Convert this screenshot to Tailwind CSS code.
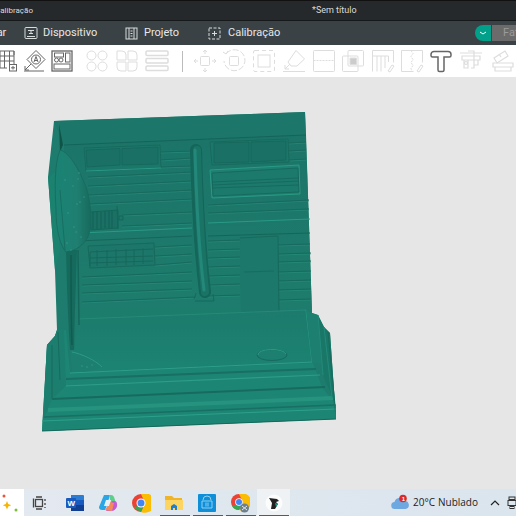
<!DOCTYPE html>
<html lang="pt">
<head>
<meta charset="UTF-8">
<title>Sem titulo</title>
<script src="https://cdn.jsdelivr.net/npm/@tailwindcss/browser@4"></script>
</head>
<body class="m-0 overflow-hidden bg-[#e6e6e6] font-['Roboto',sans-serif]">
<div class="flex h-[516px] w-[516px] flex-col overflow-hidden">

  <!-- Title bar -->
  <header class="relative flex h-[20px] shrink-0 items-center border-t border-[#111] bg-[#25292b] text-[8px] text-[#d8dcdc]">
    <span class="ml-[-5px] shrink-0">Calibração</span>
    <span class="absolute left-[312px] text-[9px]">*Sem título</span>
  </header>

  <!-- Menu -->
  <nav class="flex h-[25px] shrink-0 items-center border-t border-[#15191a] bg-[#3b4246] text-[11px] text-[#e6e8e8]">
    <span class="ml-[-22px] w-[30px] shrink-0">Editar</span>
    <svg class="ml-[16px] h-[14px] w-[14px] shrink-0" viewBox="0 0 14 14" fill="none" stroke="#d8dcdc"><rect x="1" y="1.500" width="12" height="11" rx="1"/><path d="M4 4.500h6M7 4.500v3M5 7.500h4M3 10.500h8"/></svg>
    <span class="ml-[5px] w-[52px] shrink-0">Dispositivo</span>
    <svg class="ml-[30px] h-[13px] w-[13px] shrink-0" viewBox="0 0 13 13" fill="none" stroke="#d8dcdc"><rect x="1" y="1" width="11" height="11"/><path d="M4 1v11M9 1v11M5.500 4h2M5.500 6.500h2M5.500 9h2"/></svg>
    <span class="ml-[6px] w-[34px] shrink-0">Projeto</span>
    <svg class="ml-[30px] h-[13px] w-[13px] shrink-0" viewBox="0 0 13 13" fill="none" stroke="#d8dcdc" stroke-dasharray="3 1.500"><rect x="1" y="1" width="11" height="11"/><path d="M6.500 4v5M4 6.500h5" stroke-dasharray="none"/></svg>
    <span class="ml-[7px] w-[50px] shrink-0">Calibração</span>
    <div class="ml-[197px] flex h-[16px] w-[16px] shrink-0 items-center justify-center rounded-l-full bg-[#00a08a]">
      <svg class="h-[8px] w-[8px]" viewBox="0 0 8 8" fill="none" stroke="#fff"><path d="M1 3l3 2 3-2"/></svg>
    </div>
    <div class="ml-[1px] h-[16px] w-[40px] shrink-0 bg-[#6b6b6b] pl-[11px] text-[11px] leading-[16px] text-[#9a9a9a]">Fatiar</div>
  </nav>

  <!-- Toolbar -->
  <div class="flex h-[32px] shrink-0 items-center bg-white">
    <svg class="ml-[-5px] h-[24px] w-[24px] shrink-0" viewBox="0 0 24 24" fill="none" stroke="#666"><path d="M5 2h14v14M5 7h14M5 12h14M9.500 2v17M14.500 2v14M5 2v17M19 2v4"/><rect x="14.500" y="15.500" width="7" height="6.500" fill="#fff"/><path d="M18 17v3.500M16 18.800h4M3 19h9"/></svg>
    <svg class="ml-[4px] h-[24px] w-[24px] shrink-0" viewBox="0 0 24 24" fill="none" stroke="#666"><path d="M13 1.500l9 9-9 9-9-9z"/><circle cx="13" cy="10.500" r="4.500"/><path d="M13 7.500l-2 5.500M13 7.500l2 5.500M11.700 11.500h2.600"/><path d="M1 22h20M8 15l-6 6M2 17v4h4"/></svg>
    <svg class="ml-[3px] h-[24px] w-[24px] shrink-0" viewBox="0 0 24 24" fill="none" stroke="#666"><rect x="2" y="2" width="20" height="20" stroke-width="1.300"/><rect x="4.500" y="4" width="9" height="4"/><rect x="15.500" y="4" width="4.500" height="9"/><circle cx="6.500" cy="11" r="2"/><circle cx="11" cy="11" r="2"/><rect x="4" y="15" width="16" height="5"/></svg>
    <svg class="ml-[11px] h-[24px] w-[24px] shrink-0" viewBox="0 0 24 24" fill="none" stroke="#ddd"><circle cx="6.500" cy="6.500" r="4.500"/><circle cx="17.500" cy="6.500" r="4.500"/><circle cx="6.500" cy="17.500" r="4.500"/><circle cx="17.500" cy="17.500" r="4.500"/></svg>
    <svg class="ml-[6px] h-[24px] w-[24px] shrink-0" viewBox="0 0 24 24" fill="none" stroke="#ddd"><path d="M2 2h5a4 4 0 0 1 4 4v5H2zM13 2h5a4 4 0 0 1 4 4v5h-9zM2 13h9v9H6a4 4 0 0 1-4-4zM13 13h9v5a4 4 0 0 1-4 4h-5z"/></svg>
    <svg class="ml-[6px] h-[24px] w-[24px] shrink-0" viewBox="0 0 24 24" fill="none" stroke="#ddd" stroke-width="1.500"><rect x="1" y="2" width="22" height="4.500" rx="1"/><rect x="1" y="9.500" width="22" height="4.500" rx="1"/><rect x="1" y="17" width="22" height="4.500" rx="1"/></svg>
    <div class="ml-[13px] h-[21px] w-px shrink-0 bg-[#bbb]"></div>
    <svg class="ml-[10px] h-[24px] w-[24px] shrink-0" viewBox="0 0 24 24" fill="none" stroke="#ddd"><rect x="7.500" y="7.500" width="9" height="9" rx="1"/><path d="M12 5V1M10 3l2-2 2 2M12 19v4M10 21l2 2 2-2M5 12H1M3 10l-2 2 2 2M19 12h4M21 10l2 2-2 2"/></svg>
    <svg class="ml-[5px] h-[24px] w-[24px] shrink-0" viewBox="0 0 24 24" fill="none" stroke="#ddd"><rect x="7.500" y="7.500" width="9" height="9" rx="1"/><path d="M4 5a10.500 10.500 0 1 1-2 7" stroke-dasharray="6 2"/><path d="M1 3l3 2 2-3"/></svg>
    <svg class="ml-[6px] h-[24px] w-[24px] shrink-0" viewBox="0 0 24 24" fill="none" stroke="#ddd"><rect x="6" y="6" width="12" height="12"/><path d="M3 1.500h18a1.500 1.500 0 0 1 1.500 1.500v18a1.500 1.500 0 0 1-1.500 1.500H3A1.500 1.500 0 0 1 1.500 21V3A1.500 1.500 0 0 1 3 1.500z" stroke-dasharray="4 3"/></svg>
    <svg class="ml-[6px] h-[24px] w-[24px] shrink-0" viewBox="0 0 24 24" fill="none" stroke="#ddd"><path d="M14 1.500l8.500 8.500-7.500 7H9L6 13z"/><path d="M1 22.500h22M8 15l-5 5M3 16v4h4"/></svg>
    <svg class="ml-[6px] h-[24px] w-[24px] shrink-0" viewBox="0 0 24 24" fill="none" stroke="#ddd"><rect x="1.500" y="1.500" width="21" height="21" rx="1"/><path d="M1.500 11.500h21" stroke-dasharray="2 1"/></svg>
    <svg class="ml-[5px] h-[24px] w-[24px] shrink-0" viewBox="0 0 24 24" fill="none" stroke="#ddd"><rect x="7" y="1.500" width="15.500" height="15.500" rx="1"/><rect x="1.500" y="7" width="15.500" height="15.500" rx="1"/><path d="M9 9h6.500v6.500H9z" fill="#ccc"/></svg>
    <svg class="ml-[6px] h-[24px] w-[24px] shrink-0" viewBox="0 0 24 24" fill="none" stroke="#ddd"><path d="M1.500 22.500v-21h21v12M1.500 7h16v6M6 7v15.500M10 7v15.500M14 7v12"/><path d="M17 22l4-6 2 1-4 6z"/></svg>
    <svg class="ml-[5px] h-[24px] w-[24px] shrink-0" viewBox="0 0 24 24" fill="none" stroke="#ddd"><path d="M1.500 22.500v-21h21v12M1.500 22.500h12"/><path d="M11 1.500l2 3-2 3 2 3-2 3 2 3-2 3 1 3" stroke-dasharray="2 1"/><path d="M17 22l4-6 2 1-4 6z"/></svg>
    <svg class="ml-[5px] h-[24px] w-[24px] shrink-0" viewBox="0 0 24 24" fill="#fff" stroke="#666" stroke-width="1.500"><path d="M2 5.500a3 3 0 0 1 3-3h14a3 3 0 0 1 3 3v1a1.500 1.500 0 0 1-1.500 1.500H15v13a1.500 1.500 0 0 1-1.500 1.500h-3A1.500 1.500 0 0 1 9 21V8H3.500A1.500 1.500 0 0 1 2 6.500z"/></svg>
    <svg class="ml-[6px] h-[24px] w-[24px] shrink-0" viewBox="0 0 24 24" fill="none" stroke="#ddd" stroke-width="1.200"><path d="M1 4h22M3 7h18v4H3zM5 11v8h4v-8M15 11v5h4v-5M9 2h6v17h-3"/><circle cx="7" cy="14" r="1.500"/></svg>
    <svg class="ml-[8px] h-[24px] w-[24px] shrink-0" viewBox="0 0 24 24" fill="none" stroke="#ddd" stroke-width="1.200"><path d="M3 9l11-7 3 5-11 7z"/><path d="M2 14h20v4H2zM4 18h16v4H4z"/><path d="M8 5l2 3"/></svg>
  </div>

  <!-- Plate view -->
  <main class="min-h-0 flex-1 bg-[#e6e6e6]">
    <svg class="block h-full w-full blur-[0.4px]" viewBox="0 77 516 412">
      <defs>
        <linearGradient id="wall" x1="0" y1="0" x2="0" y2="1"><stop offset="0" stop-color="#1c7468"/><stop offset="1" stop-color="#1d7d6d"/></linearGradient>
        <linearGradient id="floor" x1="0" y1="0" x2="0" y2="1"><stop offset="0" stop-color="#1c7b6c"/><stop offset="1" stop-color="#1c8372"/></linearGradient>
        <linearGradient id="leaf" x1="0" y1="0" x2="1" y2="0"><stop offset="0" stop-color="#1a8373"/><stop offset=".6" stop-color="#1f7f71"/><stop offset="1" stop-color="#176a5d"/></linearGradient>
      </defs>

      <!-- base silhouette -->
      <path d="M54 121L305 112L312 313L318 315L324 327L330 333L336 419L42 431L47 345L55 336L57 330L55 270L48 177Z" fill="#1d7c6d"/>

      <!-- wall -->
      <path d="M64 145L306 135L312 313L78 320L64 250Z" fill="url(#wall)"/>
      <path d="M54 121L305 112L306 135L64 145Z" fill="#1c7669"/>
      <path d="M64 145L306 135" stroke="#14645a" stroke-width="1"/>
      <path d="M59 124L63 145L60 152Z" fill="#0f5449"/>
      <path d="M48 177L56 172L60 250L55 270Z" fill="#1b8270"/>

      <!-- siding -->
      <g fill="none" stroke-width="1" stroke="#2a927f" opacity=".55" transform="translate(0 1)">
        <path d="M160 152L192 151M160 160L192 158M160 167L192 166M88 177L192 172M88 186L192 181M88 195L192 190M88 204L192 199M122 215L192 212M122 226L192 223M155 247L192 245M155 256L192 254M155 265L192 262M82 277L192 272M82 285L192 281M82 293L192 289M82 302L196 297M288 143L306 142M288 151L306 150M288 160L306 159M208 205L309 200M208 213L309 209M208 241L240 240M208 250L240 249M208 258L240 257M208 267L240 266M208 276L240 275M208 285L240 284M208 296L240 295M278 245L310 244M278 254L311 253M278 262L311 261M278 272L311 271M278 281L311 280M278 290L311 289M278 300L311 299"/>
      </g>
      <g fill="none" stroke-width="1" stroke="#176a5d">
        <path d="M160 152L192 151M160 160L192 158M160 167L192 166M88 177L192 172M88 186L192 181M88 195L192 190M88 204L192 199M122 215L192 212M122 226L192 223M155 247L192 245M155 256L192 254M155 265L192 262M82 277L192 272M82 285L192 281M82 293L192 289M82 302L196 297M288 143L306 142M288 151L306 150M288 160L306 159M208 205L309 200M208 213L309 209M208 241L240 240M208 250L240 249M208 258L240 257M208 267L240 266M208 276L240 275M208 285L240 284M208 296L240 295M278 245L310 244M278 254L311 253M278 262L311 261M278 272L311 271M278 281L311 280M278 290L311 289M278 300L311 299"/>
      </g>
      <path d="M80 233L192 228M208 223L310 219" stroke="#2a9a85" stroke-width="1"/>
      <path d="M78 241L192 236M208 236L310 233" stroke="#15665a" stroke-width="1"/>

      <!-- top left window -->
      <path d="M84 148L160 145L161 168L86 171Z" fill="#1b776a" stroke="#176a5d"/>
      <path d="M86 150L120 148.500V165L87 167ZM122 148.500L158 147V164L122 165Z" fill="#1a7064" stroke="#15665a" stroke-width=".8"/>
      <path d="M86 171L161 168" stroke="#2a9a85"/>

      <!-- top right window -->
      <path d="M210 142L288 139L289 162L212 165Z" fill="#1b776a" stroke="#176a5d"/>
      <path d="M214 143L249 142V162L214 163ZM251 142L286 141V160L251 162Z" fill="#1a7064" stroke="#15665a" stroke-width=".8"/>

      <!-- sign panel -->
      <path d="M210 170L299 165L300 194L212 198Z" fill="#1e8070" stroke="#2a9a85"/>
      <path d="M212 173L298 168L299 192L213 196Z" fill="#1c7a6c" stroke="#15665a" stroke-width=".8"/>
      <path d="M212 182L299 178M212 185L299 181M212 188L299 185" stroke="#15665a" stroke-width=".8"/>

      <!-- vent -->
      <path d="M90 212L118 210V228L91 230Z" fill="#1a7064" stroke="#15665a"/>
      <path d="M93 212V229M97 212V229M101 212V229M105 211V228M109 211V228M112 211V228" stroke="#135f54"/>
      <path d="M117 206L118 229M119 216h4v4h-4z" stroke="#15665a" fill="#1c7669"/>

      <!-- grid window -->
      <path d="M88 246L154 243L155 265L90 268Z" fill="#1c7669" stroke="#176a5d"/>
      <path d="M90 252L153 249M90 258L153 256M90 263L153 261M97 250V266M107 250V266M116 249V265M126 249V265M134 249V265M143 248V264M90 252V266" stroke="#15665a" stroke-width=".9" fill="none"/>

      <!-- door -->
      <path d="M240 238L278 236L279 312L241 313" fill="#1c786a" stroke="#176a5d"/>
      <path d="M244 272L274 271" stroke="#176a5d" stroke-width=".8"/>

      <!-- drain pipe -->
      <path d="M196 150C197 190 200 250 205 292" fill="none" stroke="#14655a" stroke-width="12" stroke-linecap="round"/>
      <path d="M197 150C198 190 201 250 205 292" fill="none" stroke="#1a7466" stroke-width="8" stroke-linecap="round"/>
      <path d="M195 150C196 190 199 250 204 290" fill="none" stroke="#23887a" stroke-width="3" stroke-linecap="round"/>
      <path d="M194 299L196 293M195 301H214L213 294" fill="none" stroke="#176a5d"/>

      <!-- floor -->
      <path d="M78 319L306 310L313 363L72 373Z" fill="url(#floor)"/>
      <path d="M78 319L306 310" stroke="#268a78"/>
      <path d="M306 310L312 362" stroke="#2a9a85"/>
      <ellipse cx="272" cy="355" rx="15" ry="5.500" fill="#1c7f6f" stroke="#176a5d"/>
      <path d="M258 355a14 5 0 0 1 28 -1" fill="none" stroke="#2d9a86"/>

      <!-- base steps -->
      <path d="M72 373L313 363L322 387L336 405L336 419L42 431L47 345L55 336L57 330L66 330L70 372Z" fill="#1d8574"/>
      <path d="M70 373L313 362" stroke="#2d9d88"/>
      <path d="M66 379L316 369" stroke="#186f62" stroke-width="2"/>
      <path d="M64 386L320 375" stroke="#2d9d88" stroke-width="1.200"/>
      <path d="M52 399L325 387" stroke="#176b5e" stroke-width="2"/>
      <path d="M48 410L333 398" stroke="#26937f" stroke-width="4"/>
      <path d="M44 417L335 405" stroke="#186f62" stroke-width="1.500"/>
      <path d="M42 421L336 409" stroke="#2da08b" stroke-width="1"/>
      <path d="M42 431L336 419" stroke="#14695c" stroke-width="1"/>

      <!-- base right side -->
      <path d="M306 310L312 313L318 315L322 364L312 363Z" fill="#1c7f6f"/>
      <path d="M318 315L324 327L330 333L336 419L333 398L324 378Z" fill="#197767"/>
      <path d="M318 315L323 375M324 327L332 398" stroke="#23897a" fill="none"/>
      <path d="M328 332L335 405" stroke="#176b5e" fill="none"/>

      <!-- base left side -->
      <path d="M47 345L55 336L57 330L64 328L66 386L52 399L43 420Z" fill="#1c7e6e"/>
      <path d="M52 345L52 399M58 332L60 380" stroke="#176b5e" fill="none"/>

      <!-- tree -->
      <path d="M66 250H78C76 280 76 320 74 350C84 353 95 360 102 367C90 372 80 372 72 372L70 352C68 320 66 280 66 250Z" fill="#1d7f70"/>
      <path d="M66 250C67 290 68 320 70 350L74 350C75 310 76 280 77 250Z" fill="#166a5d"/>
      <path d="M71 255C71 290 71 320 72 345" fill="none" stroke="#125b50" stroke-width="1.500"/>
      <path d="M78 250L79 325" stroke="#15665a" stroke-width="1.500"/>
      <path d="M60 150C70 152 82 175 87 190C91 205 93 225 88 237C83 245 78 250 66 252C60 245 56 230 56 210C55 190 54 165 60 150Z" fill="url(#leaf)" stroke="#176a5d" stroke-width=".8"/>
      <path d="M60 190L65 250" stroke="#15665a" stroke-width=".7"/>
      <g fill="#34998a">
        <circle cx="79" cy="173" r=".8"/><circle cx="65" cy="180" r=".8"/><circle cx="78" cy="179" r=".7"/><circle cx="73" cy="186" r=".7"/><circle cx="80" cy="202" r=".8"/><circle cx="77" cy="204" r=".8"/><circle cx="84" cy="197" r=".7"/><circle cx="68" cy="213" r=".8"/><circle cx="74" cy="227" r=".8"/><circle cx="76" cy="232" r=".7"/><circle cx="81" cy="237" r=".7"/><circle cx="67" cy="243" r=".8"/><circle cx="71" cy="250" r=".7"/>
        <circle cx="82" cy="366" r=".8"/><circle cx="87" cy="367" r=".8"/><circle cx="92" cy="365" r=".7"/>
      </g>
      <path d="M72 352C82 354 95 360 102 367" fill="none" stroke="#2c9a85"/>
    </svg>
  </main>

  <!-- Windows taskbar -->
  <footer class="relative flex h-[27px] shrink-0 items-center bg-gradient-to-r from-[#e3e9ef] to-[#dbe5ee] font-['Open_Sans',sans-serif] text-[10px] text-[#222]">
    <div class="flex h-[27px] w-[24px] shrink-0 items-center justify-center bg-white">
      <svg class="h-[24px] w-[24px]" viewBox="0 0 24 24"><circle cx="4" cy="5" r="1.500" fill="#e8553a"/><path d="M7 10l1.200 3 3 1.200-3 1.200L7 18.500 5.800 15.400l-3-1.200 3-1.200z" fill="#f7b500"/><circle cx="16" cy="19" r="1.500" fill="#7cbf3a"/></svg>
    </div>
    <svg class="ml-[8px] h-[16px] w-[16px] shrink-0" viewBox="0 0 16 16" fill="none" stroke="#444" stroke-width="1.300"><rect x="3.500" y="4.500" width="7" height="7"/><path d="M1.500 3.500v9M13 4v2M13 8v2M13 12v1M4 2h6M4 14h6"/></svg>
    <svg class="ml-[17px] h-[20px] w-[20px] shrink-0" viewBox="0 0 20 20"><path d="M6 2h12a1 1 0 0 1 1 1v14a1 1 0 0 1-1 1H6z" fill="#2b7cd3"/><path d="M6 12h13v6H6z" fill="#103f91"/><path d="M6 7h13v5H6z" fill="#185abd"/><rect x="1" y="5" width="10" height="10" rx="1" fill="#185abd"/><text x="2.400" y="13" font-size="8" font-weight="700" fill="#fff" font-family="Liberation Sans, sans-serif">W</text></svg>
    <svg class="ml-[13px] h-[20px] w-[20px] shrink-0" viewBox="0 0 20 20"><path d="M6 2h6l-3 10-2 5H4a3 3 0 0 1-3-3z" fill="#2aa5e6"/><path d="M11 2h2a3 3 0 0 1 3 2l2 6-5 1z" fill="#5fce8b"/><path d="M14 8h2a3 3 0 0 1 3 3 6 6 0 0 1-5 7H8z" fill="#c45ad6"/><path d="M7 17l5-8 4 1-2 8z" fill="#f28a5c"/><path d="M8 7h5l-2 6H6z" fill="#e8eef5"/></svg>
    <svg class="ml-[13px] h-[20px] w-[20px] shrink-0" viewBox="0 0 20 20"><circle cx="10" cy="10" r="9" fill="#ea4335"/><path d="M10 1h7.800A9 9 0 0 1 10 19l4-9z" fill="#fbbc04"/><path d="M2.200 14.500L10 19l4-9z" fill="#34a853"/><circle cx="10" cy="10" r="4.500" fill="#fff"/><circle cx="10" cy="10" r="3.500" fill="#4285f4"/></svg>
    <svg class="ml-[13px] h-[20px] w-[20px] shrink-0" viewBox="0 0 20 20"><path d="M1 3h7l2 2h8v4H1z" fill="#f0b429"/><path d="M1 7h18v10H1z" fill="#fcd462"/><path d="M7 17v-4l3-2 3 2v4h-2v-2H9v2z" fill="#1f7fd1"/></svg>
    <svg class="ml-[13px] h-[20px] w-[20px] shrink-0" viewBox="0 0 20 20"><rect x="1" y="1" width="18" height="18" rx="1" fill="#0f8fd8"/><path d="M6 7a4 4 0 0 1 8 0M5 8h10v7H5zM9 9.500v4M11 9.500v4" fill="none" stroke="#8fd0ef"/></svg>
    <svg class="ml-[13px] h-[20px] w-[20px] shrink-0" viewBox="0 0 20 20"><circle cx="9" cy="9" r="8" fill="#ea4335"/><path d="M9 1h7a8 8 0 0 1-7 16l4-8z" fill="#fbbc04"/><path d="M2 13a8 8 0 0 0 7 4l4-8z" fill="#34a853"/><circle cx="9" cy="9" r="3.800" fill="#fff"/><circle cx="9" cy="9" r="3" fill="#4285f4"/><circle cx="14.500" cy="15" r="4.500" fill="#6d7f8c"/><path d="M12 13l5 4M17 13l-5 4" stroke="#dfe6ea"/></svg>
    <div class="ml-[7px] flex h-[27px] w-[33px] shrink-0 items-center justify-center bg-[#eef2f5]">
      <svg class="h-[18px] w-[18px]" viewBox="0 0 18 18"><circle cx="9" cy="9" r="8.500" fill="#fbfcfc"/><path d="M4 4l8 1 2 2-3 1 2 2-3 5H6l1-6z" fill="#222"/><path d="M10 9l3 1-2 3z" fill="#1f9d88"/></svg>
    </div>
    <div class="absolute bottom-0 left-[160px] flex gap-[3px]">
      <div class="h-[1px] w-[30px] bg-[#0a6fc2]"></div><div class="h-[1px] w-[30px] bg-[#0a6fc2]"></div><div class="h-[1px] w-[30px] bg-[#0a6fc2]"></div><div class="h-[1px] w-[30px] bg-[#0a6fc2]"></div>
    </div>
    <svg class="ml-[101px] h-[18px] w-[18px] shrink-0" viewBox="0 0 18 18"><path d="M4 15a3.500 3.500 0 0 1-.500-7A5 5 0 0 1 13 7a4 4 0 0 1 1.500 8z" fill="#6ea8e0"/><circle cx="12" cy="4.500" r="3.800" fill="#d92b2b"/><text x="10.800" y="7" font-size="6" font-weight="700" fill="#fff" font-family="Liberation Sans, sans-serif">1</text></svg>
    <span class="ml-[4px] w-[25px] shrink-0">20°C</span>
    <span class="w-[37px] shrink-0">Nublado</span>
    <svg class="ml-[15px] h-[10px] w-[10px] shrink-0" viewBox="0 0 10 10" fill="none" stroke="#222" stroke-width="1.200"><path d="M1 7l4-4 4 4"/></svg>
    <svg class="ml-[7px] h-[14px] w-[10px] shrink-0" viewBox="0 0 10 14" fill="none" stroke="#333"><rect x="2" y="1" width="6" height="2.500"/><rect x="1" y="4.500" width="8" height="5"/><rect x="3" y="10.500" width="4" height="2"/></svg>
  </footer>
</div>
</body>
</html>
